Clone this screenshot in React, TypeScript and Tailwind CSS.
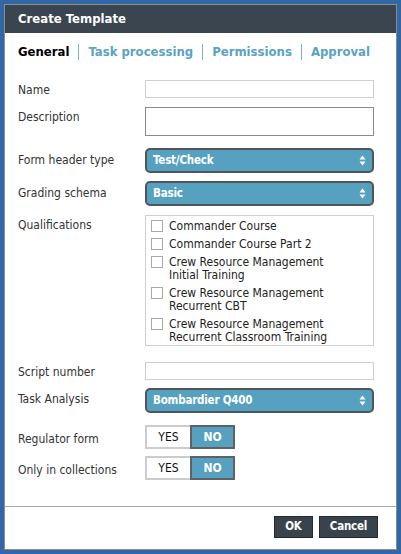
import React from "react";

const font = { fontFamily: '"DejaVu Sans Condensed", "DejaVu Sans", Verdana, sans-serif' };

function Arrows() {
  return (
    <svg width="7" height="11" viewBox="0 0 7 11" className="shrink-0">
      <path d="M3.5 0.5 L6.5 4.5 H0.5 Z" fill="white" />
      <path d="M3.5 10.5 L6.5 6.5 H0.5 Z" fill="white" />
    </svg>
  );
}

function Select({ value }: { value: string }) {
  return (
    <div className="flex h-[25px] w-[229px] items-center justify-between rounded-[5px] border-2 border-[#4f5559] bg-[#56a1c0] pl-[6px] pr-[6px]">
      <span className="text-[11.5px] font-bold tracking-[-0.2px] text-white">{value}</span>
      <Arrows />
    </div>
  );
}

function Toggle() {
  return (
    <div className="flex h-[24px] w-[90px] text-[12px]">
      <div className="flex w-[45px] items-center justify-center border-2 border-r-0 border-[#cccccc] bg-white text-[#111]">
        YES
      </div>
      <div className="flex w-[45px] items-center justify-center border-2 border-[#5e6266] bg-[#56a1c0] font-bold text-white">
        NO
      </div>
    </div>
  );
}

function Row({
  label,
  labelPt,
  mt,
  children,
}: {
  label: string;
  labelPt: string;
  mt: string;
  children: React.ReactNode;
}) {
  return (
    <div className={`flex ${mt}`}>
      <div className={`w-[127px] shrink-0 text-[12px] leading-[16px] text-[#333] ${labelPt}`}>
        {label}
      </div>
      {children}
    </div>
  );
}

const qualifications = [
  ["Commander Course"],
  ["Commander Course Part 2"],
  ["Crew Resource Management", "Initial Training"],
  ["Crew Resource Management", "Recurrent CBT"],
  ["Crew Resource Management", "Recurrent Classroom Training"],
];

export default function App() {
  return (
    <div className="h-[554px] w-[401px] bg-[#3167a5] p-[4px] font-stretch-condensed" style={font}>
      <div className="flex h-[546px] w-[393px] flex-col border border-[#8c8c8c] bg-white">
        <div className="flex h-[28px] shrink-0 items-center bg-[#3a4550] pl-[13px] text-[13px] font-bold text-white">
          Create Template
        </div>

        <div className="ml-[13px] mt-[9px] flex h-[20px] items-center whitespace-nowrap text-[13px] font-bold">
          <span className="text-black">General</span>
          <span className="mx-[9px] h-[16px] w-px bg-[#7ab0cc]" />
          <span className="text-[#5ba2c4]">Task processing</span>
          <span className="mx-[9px] h-[16px] w-px bg-[#7ab0cc]" />
          <span className="text-[#5ba2c4]">Permissions</span>
          <span className="mx-[9px] h-[16px] w-px bg-[#7ab0cc]" />
          <span className="text-[#5ba2c4]">Approval</span>
        </div>

        <div className="ml-[13px] flex flex-col">
          <Row label="Name" labelPt="pt-[2px]" mt="mt-[18px]">
            <div className="h-[18px] w-[229px] border border-[#cfcfcf]" />
          </Row>
          <Row label="Description" labelPt="pt-[2px]" mt="mt-[9px]">
            <div className="h-[29px] w-[229px] border border-[#8a8a8a]" />
          </Row>
          <Row label="Form header type" labelPt="pt-[4px]" mt="mt-[12px]">
            <Select value="Test/Check" />
          </Row>
          <Row label="Grading schema" labelPt="pt-[4px]" mt="mt-[8px]">
            <Select value="Basic" />
          </Row>
          <Row label="Qualifications" labelPt="pt-[2px]" mt="mt-[9px]">
            <div className="flex h-[131px] w-[229px] flex-col gap-[5px] overflow-hidden border border-[#cfcfcf] pl-[5px] pt-[4px] text-[12px] leading-[13px] text-[#222]">
              {qualifications.map((lines, i) => (
                <div key={i} className="flex items-start gap-[6px]">
                  <div className="h-[12px] w-[12px] shrink-0 border border-[#a9a9a9] bg-white" />
                  <div>
                    {lines.map((l) => (
                      <div key={l}>{l}</div>
                    ))}
                  </div>
                </div>
              ))}
            </div>
          </Row>
          <Row label="Script number" labelPt="pt-[2px]" mt="mt-[16px]">
            <div className="h-[18px] w-[229px] border border-[#cfcfcf]" />
          </Row>
          <Row label="Task Analysis" labelPt="pt-[3px]" mt="mt-[8px]">
            <Select value="Bombardier Q400" />
          </Row>
          <Row label="Regulator form" labelPt="pt-[6px]" mt="mt-[12px]">
            <Toggle />
          </Row>
          <Row label="Only in collections" labelPt="pt-[6px]" mt="mt-[7px]">
            <Toggle />
          </Row>
        </div>

        <div className="mt-[26px] h-px bg-[#a8a8a8]" />

        <div className="mr-[18px] mt-[9px] flex justify-end gap-[6px] text-[11.5px] font-bold tracking-[-0.2px] text-white">
          <div className="flex h-[22px] w-[39px] items-center justify-center border border-[#22292f] bg-[#38434c]">
            OK
          </div>
          <div className="flex h-[22px] w-[59px] items-center justify-center border border-[#22292f] bg-[#38434c]">
            Cancel
          </div>
        </div>
      </div>
    </div>
  );
}
